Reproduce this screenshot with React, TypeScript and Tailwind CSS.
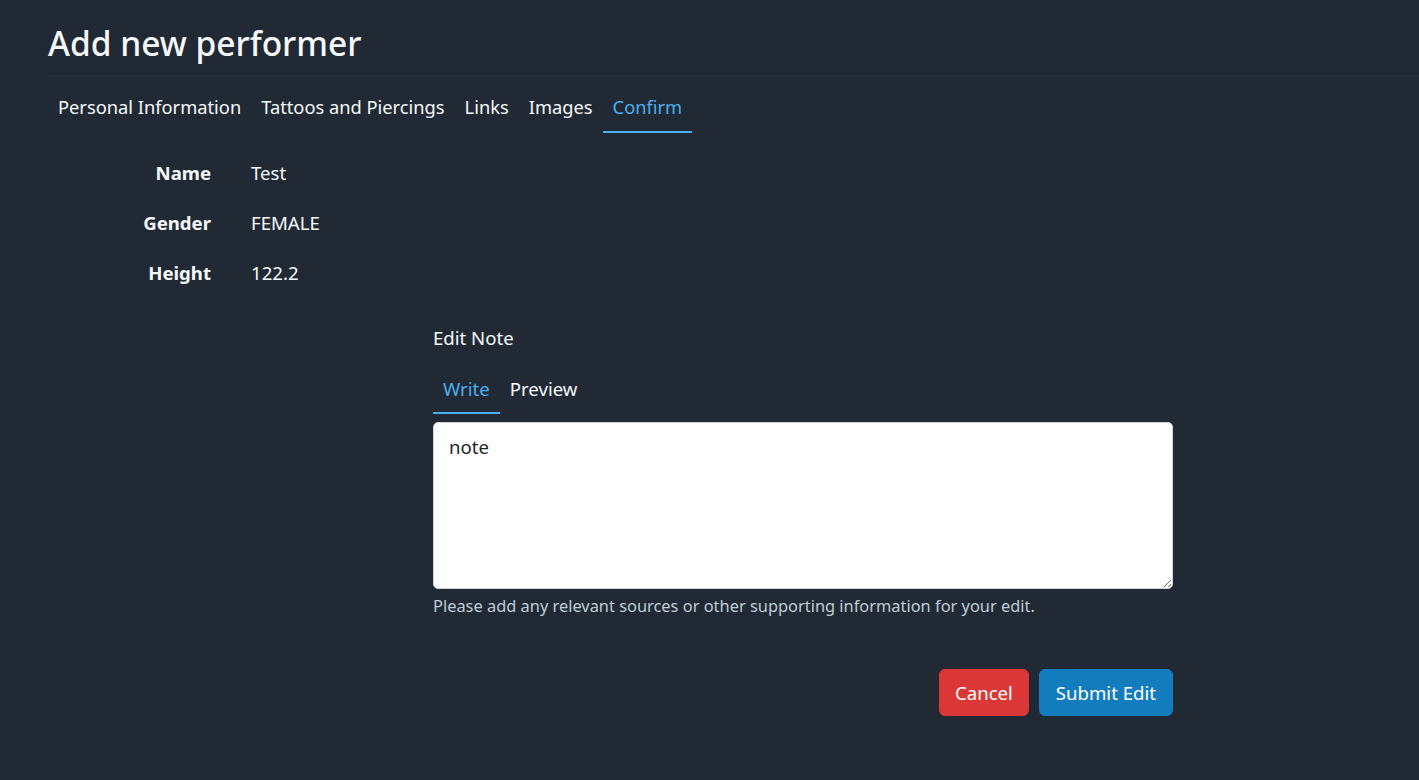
import { useState } from "react";

const tabs = ["Personal Information", "Tattoos and Piercings", "Links", "Images", "Confirm"];

const details = [
  { label: "Name", value: "Test" },
  { label: "Gender", value: "FEMALE" },
  { label: "Height", value: "122.2" },
];

export default function App() {
  const [tab, setTab] = useState("Confirm");
  const [noteTab, setNoteTab] = useState("Write");

  return (
    <main
      className="min-h-[780px] bg-[#212a34] text-[#f5f8fa] text-[18.6px] leading-[30px]"
      style={{ fontFamily: '"Segoe UI", "Noto Sans", "Liberation Sans", sans-serif' }}
    >
      <div className="pl-[48px] pt-[22px]">
        <h1 className="border-b border-[#1a2129] pb-[9px] text-[33.5px] leading-[42px] font-medium">
          Add new performer
        </h1>

        <nav className="mt-[9px] flex">
          {tabs.map((t) => (
            <button
              key={t}
              onClick={() => setTab(t)}
              className={
                "border-b-2 px-[10px] pt-[9px] pb-[9px] text-[18.3px] leading-[30px] " +
                (tab === t ? "border-[#48aff0] text-[#48aff0]" : "border-transparent text-[#f5f8fa]")
              }
            >
              {t}
            </button>
          ))}
        </nav>

        <div className="mt-[25px] flex flex-col gap-[20px]">
          {details.map((d) => (
            <div key={d.label} className="flex">
              <div className="w-[163px] text-right font-bold">{d.label}</div>
              <div className="ml-[40px]">{d.value}</div>
            </div>
          ))}
        </div>

        <div className="ml-[385px] mt-[35px] w-[740px]">
          <div>Edit Note</div>
          <div className="mt-[11px] flex">
            {["Write", "Preview"].map((t) => (
              <button
                key={t}
                onClick={() => setNoteTab(t)}
                className={
                  "border-b-2 px-[10px] pt-[10px] pb-[8px] leading-[30px] " +
                  (noteTab === t ? "border-[#48aff0] text-[#48aff0]" : "border-transparent text-[#f5f8fa]")
                }
              >
                {t}
              </button>
            ))}
          </div>
          <textarea
            defaultValue="note"
            className="mt-[8px] block h-[167px] w-full resize-y rounded-[5px] border border-[#ced4da] bg-white px-[15px] py-[9px] leading-[30px] text-[#212529] outline-none"
          />
          <div className="mt-[4px] text-[16.4px] leading-[26px] text-[#bfccd6]">
            Please add any relevant sources or other supporting information for your edit.
          </div>
          <div className="mt-[50px] flex justify-end gap-[10px]">
            <button className="rounded-[6px] border border-[#db3737] bg-[#db3737] px-[15px] py-[7.5px] leading-[30px] text-white">
              Cancel
            </button>
            <button className="rounded-[6px] border border-[#137cbd] bg-[#137cbd] px-[16px] py-[7.5px] leading-[30px] text-white">
              Submit Edit
            </button>
          </div>
        </div>
      </div>
    </main>
  );
}
